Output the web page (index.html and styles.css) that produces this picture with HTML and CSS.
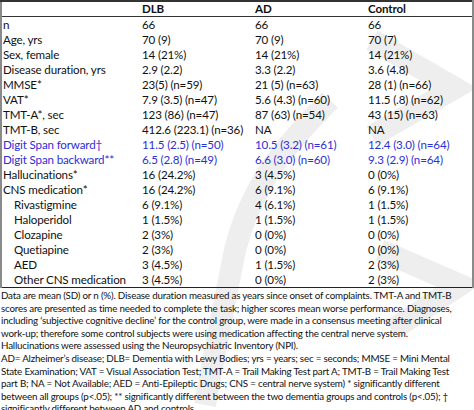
FILE: index.html
```html
<!DOCTYPE html>
<html>
<head>
<meta charset="utf-8">
<link rel="stylesheet" href="styles.css">
</head>
<body>
<div class="page">
  <svg class="watermark" width="474" height="410" viewBox="0 0 474 410">
    <path d="M372 40 L455 88 L372 136" />
    <path d="M330 100 C280 150 250 190 235 250 C225 300 215 350 205 405" />
    <path d="M380 250 L460 285 L392 330" />
  </svg>
  <table class="tbl">
    <thead>
      <tr><th class="lab"></th><th>DLB</th><th>AD</th><th>Control</th></tr>
    </thead>
    <tbody>
      <tr><td class="lab">n</td><td>66</td><td>66</td><td>66</td></tr>
      <tr><td class="lab">Age, yrs</td><td>70 (9)</td><td>70 (9)</td><td>70 (7)</td></tr>
      <tr><td class="lab">Sex, female</td><td>14 (21%)</td><td>14 (21%)</td><td>14 (21%)</td></tr>
      <tr><td class="lab">Disease duration, yrs</td><td>2.9 (2.2)</td><td>3.3 (2.2)</td><td>3.6 (4.8)</td></tr>
      <tr><td class="lab">MMSE*</td><td>23(5) (n=59)</td><td>21 (5) (n=63)</td><td>28 (1) (n=66)</td></tr>
      <tr><td class="lab">VAT*</td><td>7.9 (3.5) (n=47)</td><td>5.6 (4.3) (n=60)</td><td>11.5 (.8) (n=62)</td></tr>
      <tr><td class="lab">TMT-A*, sec</td><td>123 (86) (n=47)</td><td>87 (63) (n=54)</td><td>43 (15) (n=63)</td></tr>
      <tr><td class="lab">TMT-B, sec</td><td>412.6 (223.1) (n=36)</td><td>NA</td><td>NA</td></tr>
      <tr class="blue"><td class="lab">Digit Span forward†</td><td>11.5 (2.5) (n=50)</td><td>10.5 (3.2) (n=61)</td><td>12.4 (3.0) (n=64)</td></tr>
      <tr class="blue"><td class="lab">Digit Span backward**</td><td>6.5 (2.8) (n=49)</td><td>6.6 (3.0) (n=60)</td><td>9.3 (2.9) (n=64)</td></tr>
      <tr><td class="lab">Hallucinations*</td><td>16 (24.2%)</td><td>3 (4.5%)</td><td>0 (0%)</td></tr>
      <tr><td class="lab">CNS medication*</td><td>16 (24.2%)</td><td>6 (9.1%)</td><td>6 (9.1%)</td></tr>
      <tr><td class="lab sub">Rivastigmine</td><td>6 (9.1%)</td><td>4 (6.1%)</td><td>1 (1.5%)</td></tr>
      <tr><td class="lab sub">Haloperidol</td><td>1 (1.5%)</td><td>1 (1.5%)</td><td>1 (1.5%)</td></tr>
      <tr><td class="lab sub">Clozapine</td><td>2 (3%)</td><td>0 (0%)</td><td>0 (0%)</td></tr>
      <tr><td class="lab sub">Quetiapine</td><td>2 (3%)</td><td>0 (0%)</td><td>0 (0%)</td></tr>
      <tr><td class="lab sub">AED</td><td>3 (4.5%)</td><td>1 (1.5%)</td><td>2 (3%)</td></tr>
      <tr><td class="lab sub">Other CNS medication</td><td>3 (4.5%)</td><td>0 (0%)</td><td>2 (3%)</td></tr>
    </tbody>
  </table>
  <p class="note">Data are mean (SD) or n (%). Disease duration measured as years since onset of complaints. TMT-A and TMT-B<br>scores are presented as time needed to complete the task; higher scores mean worse performance. Diagnoses,<br>including ‘subjective cognitive decline’ for the control group, were made in a consensus meeting after clinical<br>work-up; therefore some control subjects were using medication affecting the central nerve system.<br>Hallucinations were assessed using the Neuropsychiatric Inventory (NPI).<br>AD= Alzheimer’s disease; DLB= Dementia with Lewy Bodies; yrs = years; sec = seconds; MMSE = Mini Mental<br>State Examination; VAT = Visual Association Test; TMT-A = Trail Making Test part A; TMT-B = Trail Making Test<br>part B; NA = Not Available; AED = Anti-Epileptic Drugs; CNS = central nerve system) * significantly different<br>between all groups (p&lt;.05); ** significantly different between the two dementia groups and controls (p&lt;.05); †<br>significantly different between AD and controls.</p>
</div>
</body>
</html>
```
FILE: styles.css
```css
html, body {
  margin: 0;
  padding: 0;
  background: #fff;
}
.page {
  position: relative;
  width: 474px;
  height: 410px;
  overflow: hidden;
  font-family: Lato, "Open Sans", sans-serif;
  color: #111;
}
.watermark {
  position: absolute;
  left: 0;
  top: 0;
  z-index: 0;
}
.watermark path {
  fill: none;
  stroke: #eeeeee;
  stroke-width: 22;
  stroke-linejoin: miter;
}
.tbl {
  position: relative;
  z-index: 1;
  width: 474px;
  border-collapse: collapse;
  border-top: 2px solid #333;
  border-left: 2px solid #8a8a8a;
  border-right: 2px solid #8a8a8a;
  border-bottom: 1px solid #222;
  font-size: 11.6px;
  letter-spacing: -0.15px;
  table-layout: fixed;
}
.tbl th, .tbl td {
  padding: 0 0 0 1px;
  text-align: left;
  white-space: nowrap;
  height: 15px;
  line-height: 15px;
}
.tbl th {
  font-weight: 700;
  height: 14px;
  line-height: 14px;
  border-bottom: 1px solid #333;
}
.tbl th:nth-child(1), .tbl td:nth-child(1) { width: 138px; }
.tbl th:nth-child(2), .tbl td:nth-child(2) { width: 112px; }
.tbl th:nth-child(3), .tbl td:nth-child(3) { width: 112px; }
.tbl .sub { padding-left: 12px; }
.tbl .blue td { color: #2d2ed6; }
.note {
  position: relative;
  z-index: 1;
  margin: 0;
  padding: 1px 0 0 1px;
  font-size: 9.8px;
  letter-spacing: -0.2px;
  line-height: 12.6px;
  white-space: nowrap;
}
```
